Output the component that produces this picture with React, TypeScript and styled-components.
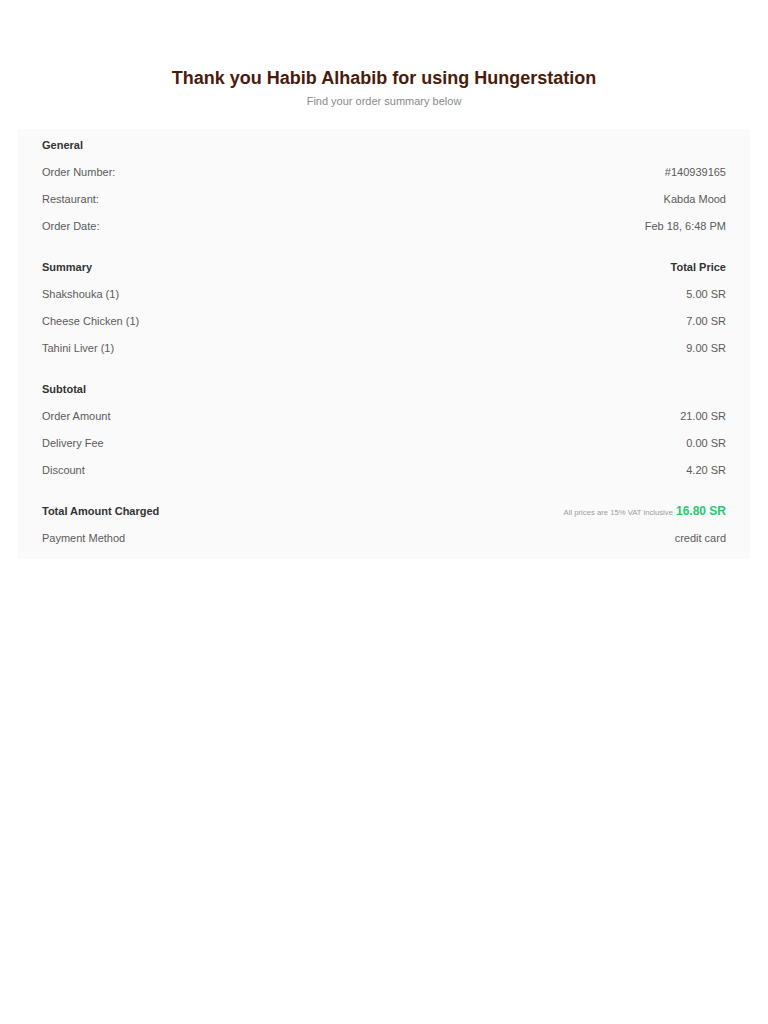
import { FC } from "react";
import styled, { createGlobalStyle } from "styled-components";

const GlobalStyle = createGlobalStyle`
  body {
    margin: 0;
    background: #fff;
    font-family: "Liberation Sans", Arial, sans-serif;
  }
`;

const Page = styled.div`
  padding: 0 18px;
`;

const Header = styled.div`
  padding-top: 67px;
  text-align: center;
`;

const Title = styled.h1`
  margin: 0;
  font-size: 18px;
  line-height: 22px;
  font-weight: bold;
  color: #4a1b0c;
`;

const SubTitle = styled.p`
  margin: 5px 0 0;
  font-size: 11px;
  line-height: 14px;
  color: #8a8a8a;
`;

const Panel = styled.div`
  margin-top: 21px;
  background: #fafafa;
  padding: 2px 24px 8px;
`;

const Section = styled.div`
  & + & {
    margin-top: 14px;
  }
`;

const Row = styled.div`
  display: flex;
  justify-content: space-between;
  align-items: center;
  height: 27px;
  font-size: 11px;
`;

const Label = styled.span<{ $bold?: boolean }>`
  color: ${(p) => (p.$bold ? "#333" : "#5a5a5a")};
  font-weight: ${(p) => (p.$bold ? "bold" : "normal")};
`;

const Value = styled.span<{ $bold?: boolean }>`
  color: ${(p) => (p.$bold ? "#333" : "#5a5a5a")};
  font-weight: ${(p) => (p.$bold ? "bold" : "normal")};
  text-align: right;
`;

const TotalBox = styled.span`
  display: flex;
  align-items: baseline;
  gap: 3px;
`;

const VatNote = styled.span`
  font-size: 7.7px;
  color: #9a9a9a;
`;

const TotalAmount = styled.span`
  font-size: 12px;
  font-weight: bold;
  color: #1fcb6e;
`;

type Line = { label: string; value: string };

const sections: { title: string; right?: string; rows: Line[] }[] = [
  {
    title: "General",
    rows: [
      { label: "Order Number:", value: "#140939165" },
      { label: "Restaurant:", value: "Kabda Mood" },
      { label: "Order Date:", value: "Feb 18, 6:48 PM" },
    ],
  },
  {
    title: "Summary",
    right: "Total Price",
    rows: [
      { label: "Shakshouka (1)", value: "5.00 SR" },
      { label: "Cheese Chicken (1)", value: "7.00 SR" },
      { label: "Tahini Liver (1)", value: "9.00 SR" },
    ],
  },
  {
    title: "Subtotal",
    rows: [
      { label: "Order Amount", value: "21.00 SR" },
      { label: "Delivery Fee", value: "0.00 SR" },
      { label: "Discount", value: "4.20 SR" },
    ],
  },
];

const App: FC = () => {
  return (
    <Page>
      <GlobalStyle />
      <Header>
        <Title>Thank you Habib Alhabib for using Hungerstation</Title>
        <SubTitle>Find your order summary below</SubTitle>
      </Header>
      <Panel>
        {sections.map((s) => (
          <Section key={s.title}>
            <Row>
              <Label $bold>{s.title}</Label>
              {s.right && <Value $bold>{s.right}</Value>}
            </Row>
            {s.rows.map((r) => (
              <Row key={r.label}>
                <Label>{r.label}</Label>
                <Value>{r.value}</Value>
              </Row>
            ))}
          </Section>
        ))}
        <Section>
          <Row>
            <Label $bold>Total Amount Charged</Label>
            <TotalBox>
              <VatNote>All prices are 15% VAT inclusive</VatNote>
              <TotalAmount>16.80 SR</TotalAmount>
            </TotalBox>
          </Row>
          <Row>
            <Label>Payment Method</Label>
            <Value>credit card</Value>
          </Row>
        </Section>
      </Panel>
    </Page>
  );
};

export default App;
